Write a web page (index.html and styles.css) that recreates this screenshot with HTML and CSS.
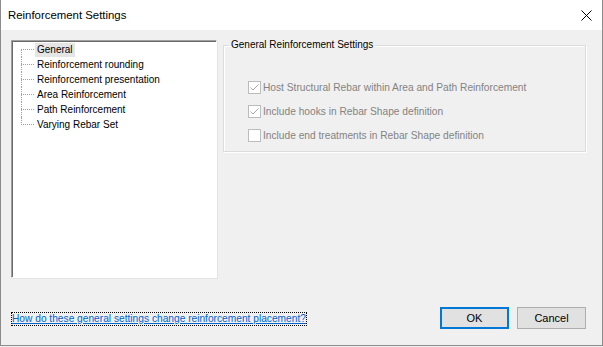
FILE: index.html
```html
<!DOCTYPE html>
<html lang="en">
<head>
  <meta charset="UTF-8" />
  <title>Reinforcement Settings</title>
  <link rel="stylesheet" href="styles.css">
</head>
<body>
  <div class="window">
    <div class="title-bar">
      <span class="title">Reinforcement Settings</span>
      <span class="close-btn">
        <svg width="11" height="11" viewBox="0 0 11 11"><path d="M0.5 0.5 L10.5 10.5 M10.5 0.5 L0.5 10.5" stroke="#000" stroke-width="1" fill="none"/></svg>
      </span>
    </div>

    <div class="content">
      <div class="main">
        <div class="tree">
          <ul>
            <li class="selected"><span class="label">General</span></li>
            <li><span class="label">Reinforcement rounding</span></li>
            <li><span class="label">Reinforcement presentation</span></li>
            <li><span class="label">Area Reinforcement</span></li>
            <li><span class="label">Path Reinforcement</span></li>
            <li class="last"><span class="label">Varying Rebar Set</span></li>
          </ul>
        </div>

        <fieldset class="group">
          <legend>General Reinforcement Settings</legend>
          <div class="options">
            <label class="check disabled">
              <span class="box checked"><svg width="11" height="11" viewBox="0 0 11 11"><path d="M1.5 5.5 L4 8 L9.5 2.5" stroke="#a8a8a8" stroke-width="1" fill="none"/></svg></span>
              Host Structural Rebar within Area and Path Reinforcement
            </label>
            <label class="check disabled">
              <span class="box checked"><svg width="11" height="11" viewBox="0 0 11 11"><path d="M1.5 5.5 L4 8 L9.5 2.5" stroke="#a8a8a8" stroke-width="1" fill="none"/></svg></span>
              Include hooks in Rebar Shape definition
            </label>
            <label class="check disabled">
              <span class="box"></span>
              Include end treatments in Rebar Shape definition
            </label>
          </div>
        </fieldset>
      </div>

      <div class="footer">
        <a href="#" class="help-link">How do these general settings change reinforcement placement?</a>
        <div class="buttons">
          <button class="btn default">OK</button>
          <button class="btn">Cancel</button>
        </div>
      </div>
    </div>
  </div>
</body>
</html>
```

FILE: styles.css
```css
* {
  box-sizing: border-box;
}

body {
  margin: 0;
  padding: 0;
  background: #f0f0f0;
  font-family: "Liberation Sans", Arial, sans-serif;
  font-size: 10.2px;
  color: #000;
}

.window {
  width: 603px;
  height: 346px;
  border: 1px solid #8c8c8c;
  border-top: none;
  background: #f0f0f0;
  display: flex;
  flex-direction: column;
}

.title-bar {
  height: 30px;
  background: #fff;
  display: flex;
  align-items: center;
  justify-content: space-between;
  padding: 0 9px 0 7px;
}

.title {
  font-size: 11.4px;
  margin-top: -1px;
}

.close-btn {
  display: flex;
  margin-right: 1px;
}

.content {
  flex: 1;
  padding: 10px 16px 0 10px;
  display: flex;
  flex-direction: column;
}

.main {
  display: flex;
  gap: 6px;
}

/* Tree */
.tree {
  width: 206px;
  height: 238px;
  flex-shrink: 0;
  background: #fff;
  border: 1px solid;
  border-color: #a0a0a0 #fff #fff #a0a0a0;
  box-shadow: inset 1px 1px 0 #696969, 1px 1px 0 #e3e3e3;
  padding-top: 1px;
  font-size: 10px;
}

.tree ul {
  list-style: none;
  margin: 0;
  padding: 0;
}

.tree li {
  position: relative;
  height: 15px;
  padding-left: 23px;
  display: flex;
  align-items: center;
}

.tree li::before {
  content: "";
  position: absolute;
  left: 9px;
  top: 7px;
  width: 13px;
  border-top: 1px dotted #a0a0a0;
}

.tree li::after {
  content: "";
  position: absolute;
  left: 9px;
  top: 0;
  height: 15px;
  border-left: 1px dotted #a0a0a0;
}

.tree li:first-child::after {
  top: 7px;
  height: 8px;
}

.tree li.last::after {
  height: 8px;
}

.tree .label {
  padding: 0 2px 1px 2px;
  line-height: 13px;
}

.tree li.selected .label {
  background: #e5e5e5;
}

/* Group box */
.group {
  width: 370px;
  height: 114px;
  margin: -2px 0 0 0;
  padding: 29px 0 0 0;
  border: 1px solid #dcdcdc;
  box-shadow: 1px 1px 0 #fff, inset 1px 1px 0 #fff;
}

.group legend {
  padding: 0 2px;
  margin-left: 5px;
  font-size: 10px;
  line-height: 14px;
}

.options {
  padding-left: 24px;
}

.check {
  display: flex;
  align-items: center;
  gap: 2px;
  height: 13px;
  margin-bottom: 11px;
}

.check.disabled {
  color: #838383;
}

.box {
  width: 13px;
  height: 13px;
  border: 1px solid #bcbcbc;
  background: #fff;
  display: flex;
}

/* Footer */
.footer {
  margin-top: 29px;
  display: flex;
  align-items: center;
  justify-content: space-between;
}

.help-link {
  color: #0066cc;
  text-decoration: underline;
  outline: 1px dotted #000;
  line-height: 12px;
  margin-top: 1px;
  margin-left: 1px;
}

.buttons {
  display: flex;
  gap: 8px;
}

.btn {
  width: 69px;
  height: 22px;
  font-family: "Liberation Sans", Arial, sans-serif;
  font-size: 11px;
  background: #e1e1e1;
  border: 1px solid #adadad;
  padding: 0;
}

.btn.default {
  border: 2px solid #0078d7;
}
```
